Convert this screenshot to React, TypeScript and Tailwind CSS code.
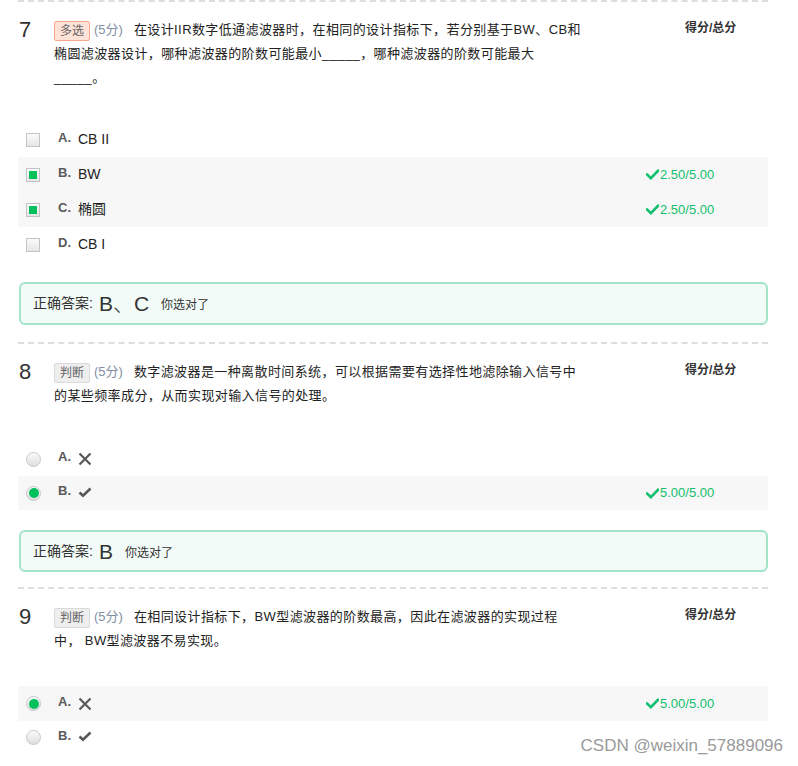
import React from "react";

const FONT = "font-['Liberation_Sans','Noto_Sans_CJK_SC',sans-serif]";

function GreenCheck() {
  return (
    <svg width="13" height="11" viewBox="0 0 13 11" className="mr-[1px]">
      <path d="M1 5.5 L4.8 9.2 L12 1.8" fill="none" stroke="#12bf6e" strokeWidth="2.6" strokeLinecap="square" />
    </svg>
  );
}

function XIcon() {
  return (
    <svg width="14" height="14" viewBox="0 0 14 14">
      <path d="M1.5 1.5 L12.5 12.5 M12.5 1.5 L1.5 12.5" stroke="#585858" strokeWidth="2.2" />
    </svg>
  );
}

function CheckIcon() {
  return (
    <svg width="14" height="11" viewBox="0 0 14 11" className="-translate-y-[1px]">
      <path d="M1.5 5.5 L5 8.8 L12.5 1.5" fill="none" stroke="#585858" strokeWidth="2.6" />
    </svg>
  );
}

function Checkbox({ checked }: { checked: boolean }) {
  return (
    <div className="w-[14px] h-[14px] border border-[#c4c4c4] bg-gradient-to-b from-[#fbfbfb] to-[#e6e6e6] p-[2px] shrink-0">
      {checked && <div className="w-full h-full bg-[#00c05c]" />}
    </div>
  );
}

function Radio({ checked }: { checked: boolean }) {
  return (
    <div className="w-[15px] h-[15px] rounded-full border border-[#c8c8c8] bg-gradient-to-b from-[#fbfbfb] to-[#dedede] flex items-center justify-center shrink-0">
      {checked && <div className="w-[10px] h-[10px] rounded-full bg-[#00c05c]" />}
    </div>
  );
}

type Opt = {
  letter: string;
  content: React.ReactNode;
  checked: boolean;
  score?: string;
};

function OptionRow({ opt, kind, h }: { opt: Opt; kind: "check" | "radio"; h: string }) {
  return (
    <div className={`flex items-center ${h} ${opt.checked ? "bg-[#f7f7f7]" : ""}`}>
      <div className="w-[40px] pl-[8px] flex items-center">
        {kind === "check" ? <Checkbox checked={opt.checked} /> : <Radio checked={opt.checked} />}
      </div>
      <div className="w-[20px] text-[13px] font-bold text-[#5a5a5a] -translate-y-[2px]">{opt.letter}.</div>
      <div className="text-[14px] text-[#222] flex items-center">{opt.content}</div>
      {opt.score && (
        <div className="ml-auto w-[122px] flex items-center text-[13px] text-[#12bf6e]">
          <GreenCheck />
          {opt.score}
        </div>
      )}
    </div>
  );
}

function Badge({ label, multi }: { label: string; multi?: boolean }) {
  return (
    <span
      className={`inline-flex items-center justify-center h-[20px] px-[5px] text-[12px] leading-none text-[#666] align-middle border rounded-[2px] tracking-normal ${
        multi ? "bg-[#fde2d7] border-[#f7a68b]" : "bg-[#eeeeee] border-[#dadada]"
      }`}
    >
      {label}
    </span>
  );
}

function Header({ num, label, multi, lines }: { num: string; label: string; multi?: boolean; lines: React.ReactNode[] }) {
  return (
    <div className="flex items-start">
      <div className="w-[36px] pl-[1px] text-[22px] leading-[24px] text-[#333]">{num}</div>
      <div className="w-[540px] text-[13px] leading-[24px] tracking-[0.4px] text-[#222]">
        {lines.map((l, i) => (
          <div key={i} className="whitespace-nowrap h-[24px]">
            {i === 0 && (
              <>
                <Badge label={label} multi={multi} />
                <span className="ml-[4px] mr-[11px] text-[#7f8fa3] tracking-normal text-[13px]">(5分)</span>
              </>
            )}
            {l}
          </div>
        ))}
      </div>
      <div className="ml-[91px] text-[12px] leading-[20px] font-bold text-[#333] whitespace-nowrap">得分/总分</div>
    </div>
  );
}

function AnswerBox({ answer, h, mb }: { answer: string; h: string; mb: string }) {
  return (
    <div className={`mt-[20px] ${mb} ${h} ml-[1px] rounded-[6px] border-2 border-[#a3e4c9] bg-[#f2fbf7] flex items-center pl-[12px] text-[#333]`}>
      <span className="text-[14px]">正确答案:</span>
      <span className="text-[21px] leading-none ml-[6px] font-light">{answer}</span>
      <span className="text-[12px] ml-[12px] mt-[3px]">你选对了</span>
    </div>
  );
}

export default function App() {
  return (
    <div className={`${FONT} relative w-[798px] h-[766px] bg-white overflow-hidden`}>
      <div className="pl-[18px] pr-[30px]">
        <div className="border-t-2 border-dashed border-[#dedede] pt-[16px]">
          <Header
            num="7"
            label="多选"
            multi
            lines={[
              "在设计IIR数字低通滤波器时，在相同的设计指标下，若分别基于BW、CB和",
              "椭圆滤波器设计，哪种滤波器的阶数可能最小_____，哪种滤波器的阶数可能最大",
              "_____。",
            ]}
          />
          <div className="mt-[32px]">
            <OptionRow kind="check" h="h-[35px]" opt={{ letter: "A", content: "CB II", checked: false }} />
            <OptionRow kind="check" h="h-[35px]" opt={{ letter: "B", content: "BW", checked: true, score: "2.50/5.00" }} />
            <OptionRow kind="check" h="h-[35px]" opt={{ letter: "C", content: "椭圆", checked: true, score: "2.50/5.00" }} />
            <OptionRow kind="check" h="h-[35px]" opt={{ letter: "D", content: "CB I", checked: false }} />
          </div>
          <AnswerBox answer="B、C" h="h-[43px]" mb="mb-[17px]" />
        </div>

        <div className="border-t-2 border-dashed border-[#dedede] pt-[16px]">
          <Header
            num="8"
            label="判断"
            lines={[
              "数字滤波器是一种离散时间系统，可以根据需要有选择性地滤除输入信号中",
              "的某些频率成分，从而实现对输入信号的处理。",
            ]}
          />
          <div className="mt-[34px]">
            <OptionRow kind="radio" h="h-[34px]" opt={{ letter: "A", content: <XIcon />, checked: false }} />
            <OptionRow kind="radio" h="h-[34px]" opt={{ letter: "B", content: <CheckIcon />, checked: true, score: "5.00/5.00" }} />
          </div>
          <AnswerBox answer="B" h="h-[42px]" mb="mb-[15px]" />
        </div>

        <div className="border-t-2 border-dashed border-[#dedede] pt-[16px]">
          <Header
            num="9"
            label="判断"
            lines={[
              "在相同设计指标下，BW型滤波器的阶数最高，因此在滤波器的实现过程",
              "中， BW型滤波器不易实现。",
            ]}
          />
          <div className="mt-[33px]">
            <OptionRow kind="radio" h="h-[35px]" opt={{ letter: "A", content: <XIcon />, checked: true, score: "5.00/5.00" }} />
            <OptionRow kind="radio" h="h-[33px]" opt={{ letter: "B", content: <CheckIcon />, checked: false }} />
          </div>
        </div>
      </div>
      <div className="absolute right-[15px] bottom-[8px] text-[17px] text-[#9a9a9a] [text-shadow:0_0_2px_#fff]">
        CSDN @weixin_57889096
      </div>
    </div>
  );
}
